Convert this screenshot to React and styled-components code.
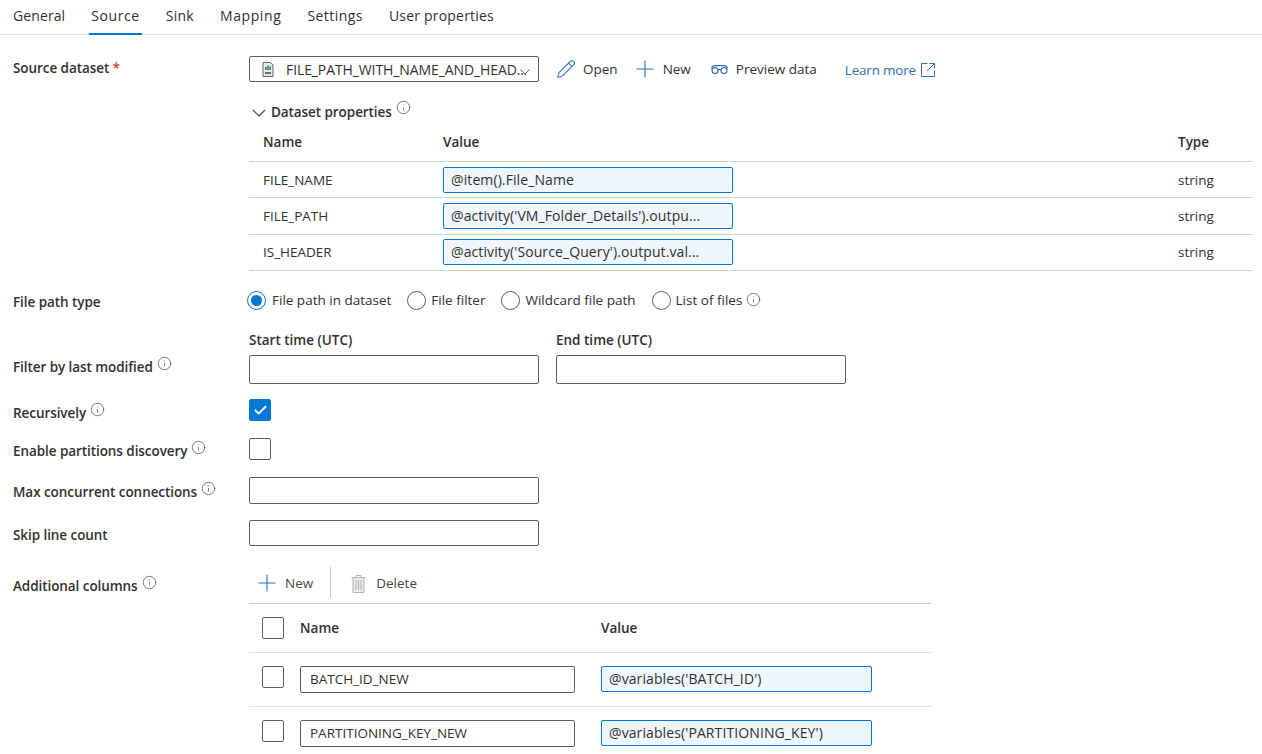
import { createGlobalStyle } from 'styled-components';
import styled from 'styled-components';
import { Pencil, Check, Info } from 'lucide-react';

const GlobalStyle = createGlobalStyle`
  html, body {
    margin: 0;
    height: 100%;
    overflow: hidden;
    background: #fff;
    color: #323130;
    font-family: "Open Sans", "Liberation Sans", sans-serif;
    font-size: 13.5px;
  }
`;

const Page = styled.div`
  width: 1262px;
  height: 754px;
  overflow: hidden;
`;

const Tabs = styled.div`
  display: flex;
  gap: 22px;
  height: 34px;
  padding-left: 11px;
  border-bottom: 1px solid #e1dfdd;
`;

const Tab = styled.div`
  height: 35px;
  box-sizing: border-box;
  padding: 6px 2px 0;
  font-size: 14px;
  letter-spacing: ${(p) => p.$ls}px;
  white-space: nowrap;
  border-bottom: ${(p) => (p.$active ? '2px solid #0078d4' : 'none')};
`;

const Form = styled.div`
  padding: 21px 0 0 13px;
`;

const Row = styled.div`
  display: flex;
  align-items: flex-start;
  height: ${(p) => p.$h}px;
  margin-bottom: ${(p) => p.$mb || 0}px;
`;

const Label = styled.div`
  width: 236px;
  flex: none;
  display: flex;
  align-items: flex-start;
  gap: 5px;
  font-weight: 570;
  font-size: 13.5px;
  letter-spacing: -0.07px;
  line-height: 18px;
  padding-top: ${(p) => p.$top || 0}px;
  white-space: nowrap;
`;

const Required = styled.span`
  color: #c4453c;
`;

const InfoMark = styled(Info)`
  width: 15px;
  height: 15px;
  margin-left: -1px;
  color: #605e5c;
  stroke-width: 1.3;
  margin-top: ${(p) => p.$top ?? -2}px;
  flex: none;
`;

const DatasetSelect = styled.div`
  width: 290px;
  height: 26px;
  box-sizing: border-box;
  border: 1px solid #605e5c;
  border-radius: 2px;
  display: flex;
  align-items: center;
  padding-left: 12px;
  position: relative;
`;

const SelectText = styled.span`
  width: 240px;
  overflow: hidden;
  white-space: nowrap;
  font-size: 14px;
  letter-spacing: -0.1px;
`;

const SelectCaret = styled.svg`
  position: absolute;
  right: 8px;
  top: 12px;
`;

const Actions = styled.div`
  display: flex;
  align-items: center;
  height: 26px;
  margin-left: 17px;
`;

const Action = styled.div`
  display: flex;
  align-items: center;
  gap: ${(p) => p.$gap || 8}px;
  margin-right: ${(p) => p.$mr || 0}px;
  font-size: 13.5px;
  white-space: nowrap;
  svg {
    color: #2f6fb7;
    flex: none;
  }
`;

const LearnMore = styled.a`
  display: flex;
  align-items: center;
  gap: 5px;
  margin-top: 1px;
  color: #2f6fb7;
  font-size: 13.5px;
  letter-spacing: -0.2px;
  white-space: nowrap;
`;

const Indented = styled.div`
  margin-left: 236px;
`;

const PropsHeading = styled.div`
  display: flex;
  align-items: flex-start;
  gap: 5px;
  height: 23px;
  padding: 20px 0 0 3px;
  font-weight: 570;
  font-size: 13.5px;
  letter-spacing: -0.07px;
  line-height: 20px;
  svg.caret {
    margin-top: 7px;
    color: #484644;
  }
`;

const PropsTable = styled.div`
  width: 1004px;
  margin-bottom: 19px;
`;

const PropRow = styled.div`
  display: grid;
  grid-template-columns: 194px 735px 1fr;
  align-items: center;
  height: ${(p) => p.$h || 36}px;
  box-sizing: border-box;
  padding-bottom: ${(p) => p.$pb || 0}px;
  border-bottom: 1px solid #d2d0ce;
  font-size: 13.5px;
  font-weight: ${(p) => (p.$head ? 570 : 400)};
  > :first-child {
    padding-left: 14px;
  }
`;

const ExprInput = styled.div`
  width: ${(p) => p.$w || 290}px;
  height: 26px;
  box-sizing: border-box;
  background: #eff6fc;
  border: 1px solid #0078d4;
  border-radius: 2px;
  padding-left: 7px;
  line-height: 24px;
  font-size: 14px;
  letter-spacing: 0.1px;
  white-space: nowrap;
`;

const Radios = styled.div`
  display: flex;
  align-items: center;
  height: 20px;
  margin-left: -2px;
  font-size: 13.5px;
`;

const Radio = styled.div`
  display: flex;
  align-items: center;
  gap: ${(p) => p.$gap || 5}px;
  margin-right: ${(p) => p.$mr}px;
  white-space: nowrap;
`;

const RadioDot = styled.span`
  width: 19px;
  height: 19px;
  box-sizing: border-box;
  border-radius: 50%;
  border: 1px solid ${(p) => (p.$on ? '#0078d4' : '#605e5c')};
  display: flex;
  align-items: center;
  justify-content: center;
  &::after {
    content: '';
    display: ${(p) => (p.$on ? 'block' : 'none')};
    width: 11px;
    height: 11px;
    border-radius: 50%;
    background: #0078d4;
  }
`;

const DateFields = styled.div`
  display: flex;
  gap: 17px;
`;

const DateField = styled.div`
  width: 290px;
`;

const FieldTitle = styled.div`
  font-weight: 570;
  font-size: 13.5px;
  line-height: 18px;
  height: 24px;
`;

const TextBox = styled.div`
  width: ${(p) => p.$w || 290}px;
  height: ${(p) => p.$h || 27}px;
  box-sizing: border-box;
  border: 1px solid #605e5c;
  border-radius: 2px;
  padding-left: 9px;
  line-height: ${(p) => (p.$h || 27) - 2}px;
  font-size: 13.5px;
  white-space: nowrap;
`;

const CheckBox = styled.div`
  width: 22px;
  height: 22px;
  box-sizing: border-box;
  border-radius: 2px;
  border: 1px solid ${(p) => (p.$on ? '#0078d4' : '#605e5c')};
  background: ${(p) => (p.$on ? '#0078d4' : '#fff')};
  display: flex;
  align-items: center;
  justify-content: center;
  flex: none;
  color: #fff;
`;

const ColumnsBlock = styled.div`
  width: 682px;
`;

const Toolbar = styled.div`
  display: flex;
  align-items: center;
  height: 32px;
  padding-bottom: 4px;
  border-bottom: 1px solid #c8c6c4;
`;

const ToolButton = styled(Action)`
  padding-left: ${(p) => p.$pl || 0}px;
  color: #484644;
`;

const ToolDivider = styled.div`
  align-self: flex-start;
  width: 1px;
  height: 31px;
  margin: 0 20px 0 17px;
  background: #c8c6c4;
`;

const ColumnRow = styled.div`
  display: grid;
  grid-template-columns: 38px 301px 1fr;
  height: ${(p) => p.$h || 54}px;
  box-sizing: border-box;
  align-items: ${(p) => (p.$head ? 'center' : 'flex-start')};
  padding: ${(p) => (p.$head ? 0 : 13)}px 0 0 13px;
  border-bottom: 1px solid #e1dfdd;
  font-size: 13.5px;
  font-weight: ${(p) => (p.$head ? 570 : 400)};
`;

const tabs = [
  { name: 'General', ls: 0.1 },
  { name: 'Source', ls: 0.6, active: true },
  { name: 'Sink', ls: 0.25 },
  { name: 'Mapping', ls: 0.6 },
  { name: 'Settings', ls: 0.45 },
  { name: 'User properties', ls: 0.2 },
];

const properties = [
  { name: 'FILE_NAME', value: '@item().File_Name', h: 36 },
  { name: 'FILE_PATH', value: "@activity('VM_Folder_Details').outpu...", h: 37 },
  { name: 'IS_HEADER', value: "@activity('Source_Query').output.val...", h: 36, pb: 2 },
];

const extraColumns = [
  { name: 'BATCH_ID_NEW', value: "@variables('BATCH_ID')" },
  { name: 'PARTITIONING_KEY_NEW', value: "@variables('PARTITIONING_KEY')" },
];

const FileIcon = () => (
  <svg width="12" height="15" viewBox="0 0 12 15" style={{ flex: 'none', marginRight: 12 }}>
    <path d="M1 .5h7.5L11 3v11.5H1z" fill="#e8eae8" stroke="#5f6b63" />
    <rect x="3" y="5" width="1.5" height="3" fill="#2f7d4f" />
    <rect x="5.2" y="3.5" width="1.5" height="4.5" fill="#2f7d4f" />
    <rect x="7.4" y="4.5" width="1.5" height="3.5" fill="#2f7d4f" />
    <rect x="3" y="10" width="6" height="2" fill="#6b6f6c" />
  </svg>
);

const PlusIcon = () => (
  <svg width="18" height="18" viewBox="0 0 18 18">
    <path d="M9 .5v17M.5 9h17" stroke="#2f6fb7" strokeWidth="1.1" fill="none" />
  </svg>
);

const GlassesIcon = () => (
  <svg width="17" height="12" viewBox="0 0 17 12" fill="none" stroke="currentColor" strokeWidth="1.1">
    <path d="M.5 5.5C1 3 2 2.6 4 2.6h9c2 0 3 .4 3.5 2.9" />
    <circle cx="4" cy="7.6" r="3" />
    <circle cx="13" cy="7.6" r="3" />
    <path d="M7 7c1-.8 2-.8 3 0" />
  </svg>
);

const ExternalIcon = () => (
  <svg width="14" height="14" viewBox="0 0 14 14" fill="none" stroke="#2f6fb7" strokeWidth="1">
    <path d="M6.5.5h-6v13h13v-6" />
    <path d="M6 8 13.5.5M8.5.5h5v5" />
  </svg>
);

const TrashIcon = () => (
  <svg width="15" height="19" viewBox="0 0 15 19" fill="none" stroke="#b3b0ad" strokeWidth="1">
    <path d="M.5 3.5h14M5 3.5V1.5h5v2" />
    <path d="M2 3.5v15h11v-15z" fill="#edebe9" />
    <path d="M5 6v10M7.5 6v10M10 6v10" />
  </svg>
);

const ChevronIcon = ({ className }) => (
  <svg className={className} width="14" height="8" viewBox="0 0 14 8" fill="none" stroke="currentColor" strokeWidth="1.2">
    <path d="M1 1l6 6 6-6" />
  </svg>
);

export default function App() {
  return (
    <Page>
      <GlobalStyle />
      <Tabs>
        {tabs.map((t) => (
          <Tab key={t.name} $active={t.active} $ls={t.ls}>{t.name}</Tab>
        ))}
      </Tabs>
      <Form>
        <Row $h={26}>
          <Label $top={3}>
            <span>Source dataset <Required>*</Required></span>
          </Label>
          <DatasetSelect>
            <FileIcon />
            <SelectText>FILE_PATH_WITH_NAME_AND_HEAD...</SelectText>
            <SelectCaret width="10" height="6" viewBox="0 0 10 6" fill="none" stroke="#605e5c">
              <path d="M.5.5 5 5 9.5.5" />
            </SelectCaret>
          </DatasetSelect>
          <Actions>
            <Action $mr={18} $gap={7}>
              <Pencil size={20} strokeWidth={1.25} />
              Open
            </Action>
            <Action $mr={20} $gap={9}>
              <PlusIcon />
              New
            </Action>
            <Action $mr={28}>
              <GlassesIcon />
              Preview data
            </Action>
            <LearnMore>
              Learn more
              <ExternalIcon />
            </LearnMore>
          </Actions>
        </Row>
        <Indented>
          <PropsHeading>
            <ChevronIcon className="caret" />
            Dataset properties
            <InfoMark />
          </PropsHeading>
          <PropsTable>
            <PropRow $head $h={37} $pb={2}>
              <span>Name</span>
              <span>Value</span>
              <span>Type</span>
            </PropRow>
            {properties.map((p) => (
              <PropRow key={p.name} $h={p.h} $pb={p.pb}>
                <span>{p.name}</span>
                <ExprInput>{p.value}</ExprInput>
                <span>string</span>
              </PropRow>
            ))}
          </PropsTable>
        </Indented>
        <Row $h={20} $mb={21}>
          <Label $top={3}>File path type</Label>
          <Radios>
            <Radio $mr={16} $gap={6}>
              <RadioDot $on />
              File path in dataset
            </Radio>
            <Radio $mr={16}>
              <RadioDot />
              File filter
            </Radio>
            <Radio $mr={16}>
              <RadioDot />
              Wildcard file path
            </Radio>
            <Radio $mr={5}>
              <RadioDot />
              List of files
            </Radio>
            <InfoMark $top={-2} />
          </Radios>
        </Row>
        <Row $h={53} $mb={15}>
          <Label $top={27}>
            Filter by last modified
            <InfoMark />
          </Label>
          <DateFields>
            <DateField>
              <FieldTitle>Start time (UTC)</FieldTitle>
              <TextBox $h={29} />
            </DateField>
            <DateField>
              <FieldTitle>End time (UTC)</FieldTitle>
              <TextBox $h={29} />
            </DateField>
          </DateFields>
        </Row>
        <Row $h={22} $mb={17}>
          <Label $top={5}>
            Recursively
            <InfoMark />
          </Label>
          <CheckBox $on>
            <Check size={15} strokeWidth={3} />
          </CheckBox>
        </Row>
        <Row $h={22} $mb={17}>
          <Label $top={4}>
            Enable partitions discovery
            <InfoMark />
          </Label>
          <CheckBox />
        </Row>
        <Row $h={27} $mb={16}>
          <Label $top={6}>
            Max concurrent connections
            <InfoMark />
          </Label>
          <TextBox />
        </Row>
        <Row $h={26} $mb={21}>
          <Label $top={6}>Skip line count</Label>
          <TextBox $h={26} />
        </Row>
        <Row $h={190}>
          <Label $top={10}>
            Additional columns
            <InfoMark />
          </Label>
          <ColumnsBlock>
            <Toolbar>
              <ToolButton $pl={9} $gap={9}>
                <PlusIcon />
                New
              </ToolButton>
              <ToolDivider />
              <ToolButton $gap={10}>
                <TrashIcon />
                Delete
              </ToolButton>
            </Toolbar>
            <ColumnRow $head $h={49}>
              <CheckBox />
              <span>Name</span>
              <span>Value</span>
            </ColumnRow>
            {extraColumns.map((c) => (
              <ColumnRow key={c.name}>
                <CheckBox />
                <TextBox $w={275}>{c.name}</TextBox>
                <ExprInput $w={271}>{c.value}</ExprInput>
              </ColumnRow>
            ))}
          </ColumnsBlock>
        </Row>
      </Form>
    </Page>
  );
}
